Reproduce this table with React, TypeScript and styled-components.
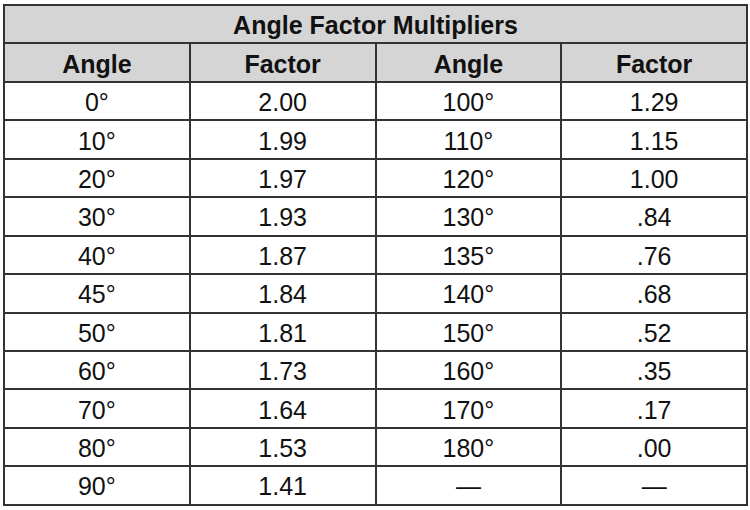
import React from "react";
import styled, { createGlobalStyle } from "styled-components";

const Global = createGlobalStyle`
  html, body { margin: 0; padding: 0; background: #ffffff; }
  body { font-family: "Liberation Sans", Arial, sans-serif; }
`;

const Page = styled.div`
  padding: 4px 0 0 3px;
`;

const Table = styled.table`
  border-collapse: collapse;
  width: 745px;
  table-layout: fixed;
  color: #111111;
  font-family: "Liberation Sans", Arial, sans-serif;
`;

const Row = styled.tr`
  height: 38.45px;
`;

const TitleCell = styled.th`
  background: #d5d5d5;
  border: 2px solid #333333;
  font-size: 25px;
  font-weight: 700;
  text-align: center;
  padding: 3px 0 0 0;
  line-height: 1;
`;

const HeadCell = styled.th`
  background: #d5d5d5;
  border: 2px solid #333333;
  font-size: 25px;
  font-weight: 700;
  text-align: center;
  padding: 3px 0 0 0;
  line-height: 1;
`;

const Cell = styled.td`
  border: 2px solid #333333;
  font-size: 25px;
  font-weight: 400;
  text-align: center;
  padding: 3px 0 0 0;
  line-height: 1;
`;

const rows: [string, string, string, string][] = [
  ["0°", "2.00", "100°", "1.29"],
  ["10°", "1.99", "110°", "1.15"],
  ["20°", "1.97", "120°", "1.00"],
  ["30°", "1.93", "130°", ".84"],
  ["40°", "1.87", "135°", ".76"],
  ["45°", "1.84", "140°", ".68"],
  ["50°", "1.81", "150°", ".52"],
  ["60°", "1.73", "160°", ".35"],
  ["70°", "1.64", "170°", ".17"],
  ["80°", "1.53", "180°", ".00"],
  ["90°", "1.41", "—", "—"],
];

export default function App() {
  return (
    <Page>
      <Global />
      <Table>
        <thead>
          <Row>
            <TitleCell colSpan={4}>Angle Factor Multipliers</TitleCell>
          </Row>
          <Row>
            <HeadCell>Angle</HeadCell>
            <HeadCell>Factor</HeadCell>
            <HeadCell>Angle</HeadCell>
            <HeadCell>Factor</HeadCell>
          </Row>
        </thead>
        <tbody>
          {rows.map((r, i) => (
            <Row key={i}>
              {r.map((c, j) => (
                <Cell key={j}>{c}</Cell>
              ))}
            </Row>
          ))}
        </tbody>
      </Table>
    </Page>
  );
}
